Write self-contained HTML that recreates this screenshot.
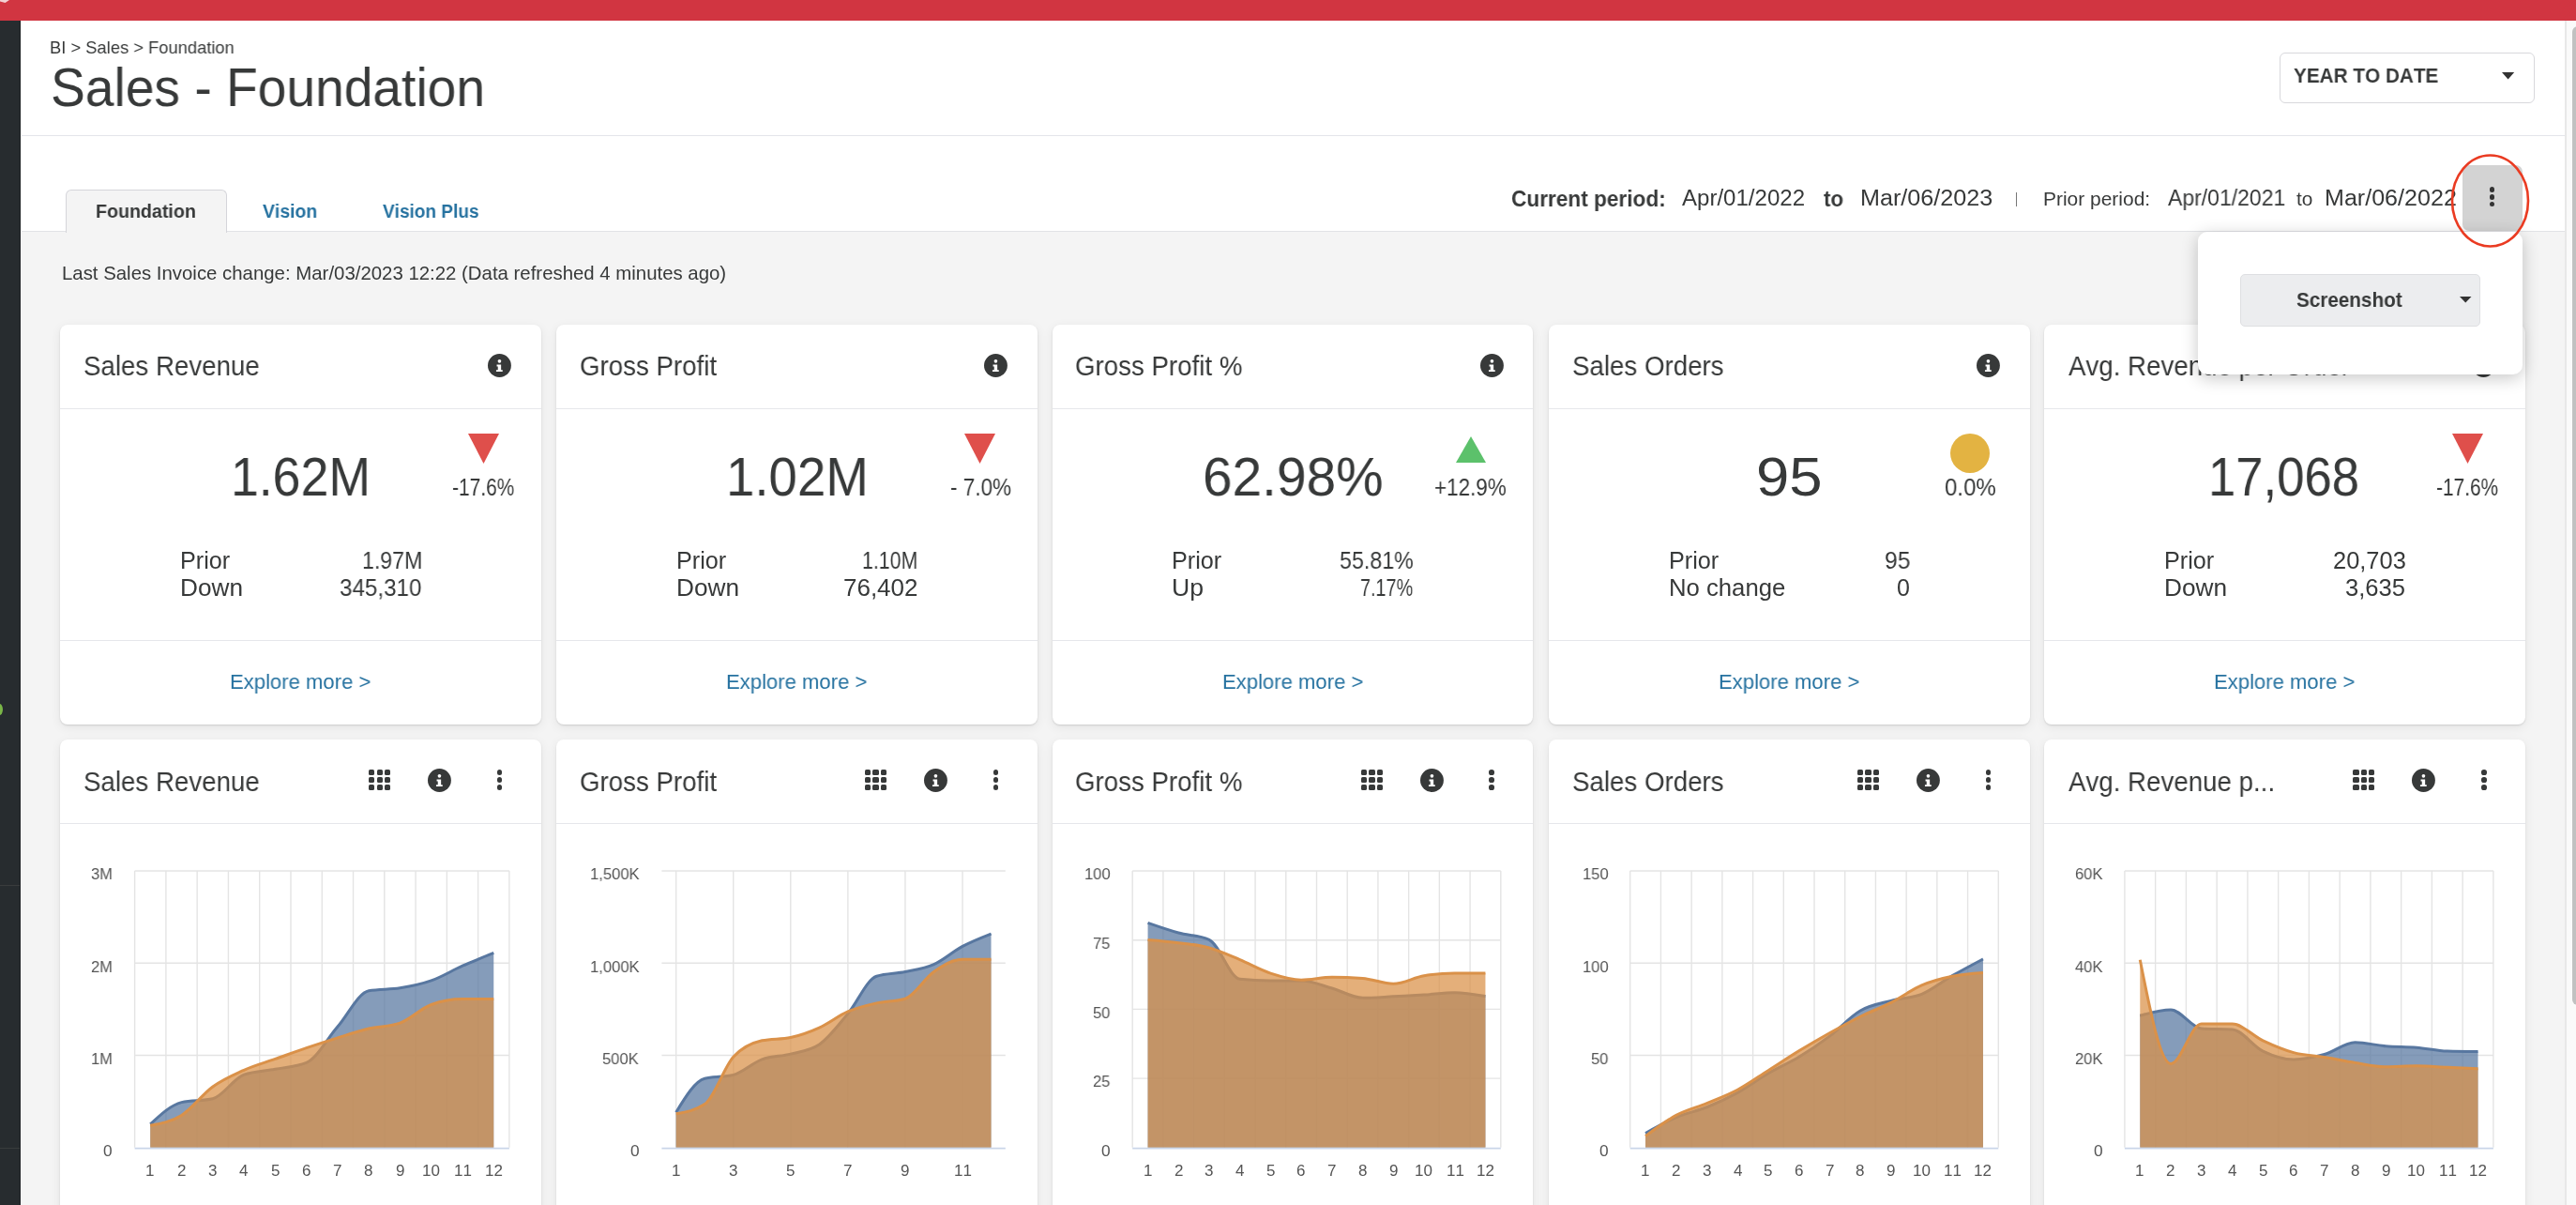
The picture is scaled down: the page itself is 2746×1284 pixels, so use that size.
<!DOCTYPE html><html><head><meta charset="utf-8"><style>
html,body{margin:0;padding:0;width:2746px;height:1284px;overflow:hidden;background:#f4f4f4}
#root{position:relative;width:2746px;height:1284px;overflow:hidden;font-family:"Liberation Sans",sans-serif;}
#root div{position:absolute;white-space:nowrap;line-height:1;box-sizing:border-box;font-kerning:none;font-feature-settings:"kern" 0,"liga" 0}
#root svg{position:absolute;overflow:visible}
#root .t{will-change:transform}
</style></head><body><div id="root">
<div style="left:0px;top:0px;width:2746px;height:1284px;background:#f4f4f4"></div>
<div style="left:22px;top:22px;width:2712px;height:125px;background:#fff"></div>
<div style="left:22px;top:144px;width:2712px;height:1px;background:#e4e5ea"></div>
<div style="left:22px;top:145px;width:2712px;height:102px;background:#fff"></div>
<div style="left:22px;top:246px;width:2712px;height:1px;background:#e1e2e6"></div>
<div style="left:0px;top:0px;width:2746px;height:22px;background:#d13541"></div>
<svg style="left:0;top:0" width="12" height="5"><path d="M0 0 H10 L5.5 3 L0 1.6 Z" fill="#f3d0d3"/></svg>
<div style="left:0px;top:22px;width:22px;height:1262px;background:#272c2f"></div>
<div style="left:22px;top:22px;width:1px;height:1262px;background:#fff"></div>
<div style="left:21px;top:22px;width:1px;height:1262px;background:#1d2123"></div>
<div style="left:0px;top:943px;width:21px;height:1px;background:#393c3d"></div>
<div style="left:0px;top:1223px;width:21px;height:1px;background:#393c3d"></div>
<div style="left:-4px;top:750px;width:7px;height:12px;border-radius:50%;background:#7ab648"></div>
<div class="t" style="left:53.00px;top:41.60px;font-size:18.4px;font-weight:normal;color:#373939;letter-spacing:0.000px;transform:scaleX(0.9974);transform-origin:0 0;">BI &gt; Sales &gt; Foundation</div>
<div class="t" style="left:54.08px;top:65.16px;font-size:57px;font-weight:normal;color:#373939;letter-spacing:0.000px;transform:scaleX(0.9677);transform-origin:0 0;">Sales - Foundation</div>
<div style="left:2430px;top:56px;width:272px;height:54px;border:1px solid #d8d8dc;border-radius:6px;background:#fff"></div>
<div class="t" style="left:2445.23px;top:70.24px;font-size:22px;font-weight:bold;color:#373939;letter-spacing:0.000px;transform:scaleX(0.9423);transform-origin:0 0;">YEAR TO DATE</div>
<svg style="left:2667.3px;top:77.2px" width="13.2" height="7.4"><path d="M0 0 L13.2 0 L6.6 7.4 Z" fill="#333"/></svg>
<div style="left:70px;top:202px;width:172px;height:46px;background:#f4f4f4;border:1px solid #d5d5da;border-bottom:none;border-radius:6px 6px 0 0"></div>
<div class="t" style="left:102.37px;top:215.04px;font-size:20px;font-weight:bold;color:#373939;letter-spacing:0.000px;transform:scaleX(0.9812);transform-origin:0 0;">Foundation</div>
<div class="t" style="left:280.36px;top:214.74px;font-size:20px;font-weight:bold;color:#2672a0;letter-spacing:0.000px;transform:scaleX(0.9700);transform-origin:0 0;">Vision</div>
<div class="t" style="left:408.16px;top:214.74px;font-size:20px;font-weight:bold;color:#2672a0;letter-spacing:0.000px;transform:scaleX(0.9506);transform-origin:0 0;">Vision Plus</div>
<div class="t" style="left:1611.21px;top:199.59px;font-size:24.3px;font-weight:bold;color:#373939;letter-spacing:0.000px;transform:scaleX(0.9316);transform-origin:0 0;">Current period:</div>
<div class="t" style="left:1793.30px;top:200.27px;font-size:23.5px;font-weight:normal;color:#373939;letter-spacing:0.000px;transform:scaleX(1.0236);transform-origin:0 0;">Apr/01/2022</div>
<div class="t" style="left:1943.77px;top:199.85px;font-size:24px;font-weight:bold;color:#373939;letter-spacing:0.000px;transform:scaleX(0.9302);transform-origin:0 0;">to</div>
<div class="t" style="left:1982.66px;top:200.27px;font-size:23.5px;font-weight:normal;color:#373939;letter-spacing:0.000px;transform:scaleX(1.0713);transform-origin:0 0;">Mar/06/2023</div>
<div style="left:2149px;top:205px;width:1.4px;height:14.5px;background:#777"></div>
<div class="t" style="left:2178.10px;top:203.38px;font-size:19.6px;font-weight:normal;color:#373939;letter-spacing:0.000px;transform:scaleX(1.0692);transform-origin:0 0;">Prior period:</div>
<div class="t" style="left:2310.80px;top:200.07px;font-size:23.5px;font-weight:normal;color:#373939;letter-spacing:0.000px;transform:scaleX(0.9780);transform-origin:0 0;">Apr/01/2021</div>
<div class="t" style="left:2448.34px;top:203.38px;font-size:19.6px;font-weight:normal;color:#373939;letter-spacing:0.000px;transform:scaleX(1.0623);transform-origin:0 0;">to</div>
<div class="t" style="left:2477.57px;top:200.07px;font-size:23.5px;font-weight:normal;color:#373939;letter-spacing:0.000px;transform:scaleX(1.0674);transform-origin:0 0;">Mar/06/2022</div>
<div style="left:2625px;top:176px;width:64px;height:70px;background:#d3d3d3;border-radius:7px"></div>
<div style="left:2654.10px;top:199.40px;width:5.2px;height:5.2px;border-radius:50%;background:#333"></div>
<div style="left:2654.10px;top:207.40px;width:5.2px;height:5.2px;border-radius:50%;background:#333"></div>
<div style="left:2654.10px;top:215.00px;width:5.2px;height:5.2px;border-radius:50%;background:#333"></div>
<div class="t" style="left:65.59px;top:280.69px;font-size:20.3px;font-weight:normal;color:#373939;letter-spacing:0.000px;transform:scaleX(1.0050);transform-origin:0 0;">Last Sales Invoice change: Mar/03/2023 12:22 (Data refreshed 4 minutes ago)</div>
<div style="left:64.1px;top:346px;width:512.7px;height:426px;background:#fff;border-radius:8px;box-shadow:0 1px 2px rgba(0,0,0,0.12),0 3px 12px rgba(0,0,0,0.07)"></div>
<div style="left:64.1px;top:435px;width:512.7px;height:1px;background:#e6e7eb"></div>
<div style="left:64.1px;top:682px;width:512.7px;height:1px;background:#e6e7eb"></div>
<div class="t" style="left:88.72px;top:375.36px;font-size:30px;font-weight:normal;color:#373939;letter-spacing:0.000px;transform:scaleX(0.9227);transform-origin:0 0;">Sales Revenue</div>
<svg style="left:519.25px;top:375.85px" width="26.90" height="26.90" viewBox="-13.45 -13.45 26.90 26.90"><circle cx="0" cy="0" r="12.45" fill="#373939"/><circle cx="0" cy="-4.6" r="1.85" fill="#fff"/><path d="M-2.9 -0.9 H1.7 V4.9 H3.3 V6.5 H-3.5 V4.9 H-1.7 V1.1 H-2.9 Z" fill="#fff"/></svg>
<div class="t" style="left:246.24px;top:479.32px;font-size:58px;font-weight:normal;color:#373939;letter-spacing:0.000px;transform:scaleX(0.9237);transform-origin:0 0;">1.62M</div>
<svg style="left:499.1px;top:462px" width="33" height="32"><path d="M0 0 H33 L16.5 32 Z" fill="#df4f4b"/></svg>
<div class="t" style="left:482.09px;top:507.46px;font-size:25.4px;font-weight:normal;color:#373939;letter-spacing:0.000px;transform:scaleX(0.8254);transform-origin:0 0;">-17.6%</div>
<div class="t" style="left:191.78px;top:584.70px;font-size:25px;font-weight:normal;color:#373939;letter-spacing:0.000px;transform:scaleX(1.0079);transform-origin:0 0;">Prior</div>
<div class="t" style="left:385.65px;top:584.70px;font-size:25px;font-weight:normal;color:#373939;letter-spacing:0.000px;transform:scaleX(0.9252);transform-origin:0 0;">1.97M</div>
<div class="t" style="left:191.70px;top:613.80px;font-size:25px;font-weight:normal;color:#373939;letter-spacing:0.000px;transform:scaleX(1.0490);transform-origin:0 0;">Down</div>
<div class="t" style="left:361.53px;top:613.80px;font-size:25px;font-weight:normal;color:#373939;letter-spacing:0.000px;transform:scaleX(0.9672);transform-origin:0 0;">345,310</div>
<div class="t" style="left:245.27px;top:715.99px;font-size:22.3px;font-weight:normal;color:#2672a0;letter-spacing:0.000px;transform:scaleX(0.9903);transform-origin:0 0;">Explore more &gt;</div>
<div style="left:593.0px;top:346px;width:512.7px;height:426px;background:#fff;border-radius:8px;box-shadow:0 1px 2px rgba(0,0,0,0.12),0 3px 12px rgba(0,0,0,0.07)"></div>
<div style="left:593.0px;top:435px;width:512.7px;height:1px;background:#e6e7eb"></div>
<div style="left:593.0px;top:682px;width:512.7px;height:1px;background:#e6e7eb"></div>
<div class="t" style="left:617.62px;top:375.36px;font-size:30px;font-weight:normal;color:#373939;letter-spacing:0.000px;transform:scaleX(0.9227);transform-origin:0 0;">Gross Profit</div>
<svg style="left:1048.15px;top:375.85px" width="26.90" height="26.90" viewBox="-13.45 -13.45 26.90 26.90"><circle cx="0" cy="0" r="12.45" fill="#373939"/><circle cx="0" cy="-4.6" r="1.85" fill="#fff"/><path d="M-2.9 -0.9 H1.7 V4.9 H3.3 V6.5 H-3.5 V4.9 H-1.7 V1.1 H-2.9 Z" fill="#fff"/></svg>
<div class="t" style="left:773.77px;top:479.32px;font-size:58px;font-weight:normal;color:#373939;letter-spacing:0.000px;transform:scaleX(0.9408);transform-origin:0 0;">1.02M</div>
<svg style="left:1028.0px;top:462px" width="33" height="32"><path d="M0 0 H33 L16.5 32 Z" fill="#df4f4b"/></svg>
<div class="t" style="left:1012.72px;top:507.46px;font-size:25.4px;font-weight:normal;color:#373939;letter-spacing:0.000px;transform:scaleX(0.8864);transform-origin:0 0;">- 7.0%</div>
<div class="t" style="left:720.68px;top:584.70px;font-size:25px;font-weight:normal;color:#373939;letter-spacing:0.000px;transform:scaleX(1.0079);transform-origin:0 0;">Prior</div>
<div class="t" style="left:919.39px;top:584.70px;font-size:25px;font-weight:normal;color:#373939;letter-spacing:0.000px;transform:scaleX(0.8534);transform-origin:0 0;">1.10M</div>
<div class="t" style="left:720.60px;top:613.80px;font-size:25px;font-weight:normal;color:#373939;letter-spacing:0.000px;transform:scaleX(1.0490);transform-origin:0 0;">Down</div>
<div class="t" style="left:898.80px;top:613.80px;font-size:25px;font-weight:normal;color:#373939;letter-spacing:0.000px;transform:scaleX(1.0392);transform-origin:0 0;">76,402</div>
<div class="t" style="left:774.17px;top:715.99px;font-size:22.3px;font-weight:normal;color:#2672a0;letter-spacing:0.000px;transform:scaleX(0.9903);transform-origin:0 0;">Explore more &gt;</div>
<div style="left:1121.8px;top:346px;width:512.7px;height:426px;background:#fff;border-radius:8px;box-shadow:0 1px 2px rgba(0,0,0,0.12),0 3px 12px rgba(0,0,0,0.07)"></div>
<div style="left:1121.8px;top:435px;width:512.7px;height:1px;background:#e6e7eb"></div>
<div style="left:1121.8px;top:682px;width:512.7px;height:1px;background:#e6e7eb"></div>
<div class="t" style="left:1146.42px;top:375.36px;font-size:30px;font-weight:normal;color:#373939;letter-spacing:0.000px;transform:scaleX(0.9227);transform-origin:0 0;">Gross Profit %</div>
<svg style="left:1576.95px;top:375.85px" width="26.90" height="26.90" viewBox="-13.45 -13.45 26.90 26.90"><circle cx="0" cy="0" r="12.45" fill="#373939"/><circle cx="0" cy="-4.6" r="1.85" fill="#fff"/><path d="M-2.9 -0.9 H1.7 V4.9 H3.3 V6.5 H-3.5 V4.9 H-1.7 V1.1 H-2.9 Z" fill="#fff"/></svg>
<div class="t" style="left:1281.56px;top:479.32px;font-size:58px;font-weight:normal;color:#373939;letter-spacing:0.000px;transform:scaleX(0.9784);transform-origin:0 0;">62.98%</div>
<svg style="left:1551.8px;top:465px" width="32" height="28"><path d="M16 0 L32 28 H0 Z" fill="#5cc16b"/></svg>
<div class="t" style="left:1528.71px;top:507.46px;font-size:25.4px;font-weight:normal;color:#373939;letter-spacing:0.000px;transform:scaleX(0.8847);transform-origin:0 0;">+12.9%</div>
<div class="t" style="left:1249.48px;top:584.70px;font-size:25px;font-weight:normal;color:#373939;letter-spacing:0.000px;transform:scaleX(1.0079);transform-origin:0 0;">Prior</div>
<div class="t" style="left:1427.97px;top:584.70px;font-size:25px;font-weight:normal;color:#373939;letter-spacing:0.000px;transform:scaleX(0.9293);transform-origin:0 0;">55.81%</div>
<div class="t" style="left:1249.37px;top:613.80px;font-size:25px;font-weight:normal;color:#373939;letter-spacing:0.000px;transform:scaleX(1.0643);transform-origin:0 0;">Up</div>
<div class="t" style="left:1450.41px;top:613.80px;font-size:25px;font-weight:normal;color:#373939;letter-spacing:0.000px;transform:scaleX(0.7913);transform-origin:0 0;">7.17%</div>
<div class="t" style="left:1302.97px;top:715.99px;font-size:22.3px;font-weight:normal;color:#2672a0;letter-spacing:0.000px;transform:scaleX(0.9903);transform-origin:0 0;">Explore more &gt;</div>
<div style="left:1650.9px;top:346px;width:512.7px;height:426px;background:#fff;border-radius:8px;box-shadow:0 1px 2px rgba(0,0,0,0.12),0 3px 12px rgba(0,0,0,0.07)"></div>
<div style="left:1650.9px;top:435px;width:512.7px;height:1px;background:#e6e7eb"></div>
<div style="left:1650.9px;top:682px;width:512.7px;height:1px;background:#e6e7eb"></div>
<div class="t" style="left:1675.52px;top:375.36px;font-size:30px;font-weight:normal;color:#373939;letter-spacing:0.000px;transform:scaleX(0.9227);transform-origin:0 0;">Sales Orders</div>
<svg style="left:2106.05px;top:375.85px" width="26.90" height="26.90" viewBox="-13.45 -13.45 26.90 26.90"><circle cx="0" cy="0" r="12.45" fill="#373939"/><circle cx="0" cy="-4.6" r="1.85" fill="#fff"/><path d="M-2.9 -0.9 H1.7 V4.9 H3.3 V6.5 H-3.5 V4.9 H-1.7 V1.1 H-2.9 Z" fill="#fff"/></svg>
<div class="t" style="left:1871.99px;top:479.32px;font-size:58px;font-weight:normal;color:#373939;letter-spacing:0.000px;transform:scaleX(1.0937);transform-origin:0 0;">95</div>
<div style="left:2078.50px;top:461.50px;width:42.4px;height:42.4px;border-radius:50%;background:#e3b342"></div>
<div class="t" style="left:2072.56px;top:507.46px;font-size:25.4px;font-weight:normal;color:#373939;letter-spacing:0.000px;transform:scaleX(0.9464);transform-origin:0 0;">0.0%</div>
<div class="t" style="left:1778.58px;top:584.70px;font-size:25px;font-weight:normal;color:#373939;letter-spacing:0.000px;transform:scaleX(1.0079);transform-origin:0 0;">Prior</div>
<div class="t" style="left:2009.05px;top:584.70px;font-size:25px;font-weight:normal;color:#373939;letter-spacing:0.000px;transform:scaleX(0.9850);transform-origin:0 0;">95</div>
<div class="t" style="left:1778.54px;top:613.80px;font-size:25px;font-weight:normal;color:#373939;letter-spacing:0.000px;transform:scaleX(1.0276);transform-origin:0 0;">No change</div>
<div class="t" style="left:2022.40px;top:613.80px;font-size:25px;font-weight:normal;color:#373939;letter-spacing:0.000px;">0</div>
<div class="t" style="left:1832.07px;top:715.99px;font-size:22.3px;font-weight:normal;color:#2672a0;letter-spacing:0.000px;transform:scaleX(0.9903);transform-origin:0 0;">Explore more &gt;</div>
<div style="left:2179.3px;top:346px;width:512.7px;height:426px;background:#fff;border-radius:8px;box-shadow:0 1px 2px rgba(0,0,0,0.12),0 3px 12px rgba(0,0,0,0.07)"></div>
<div style="left:2179.3px;top:435px;width:512.7px;height:1px;background:#e6e7eb"></div>
<div style="left:2179.3px;top:682px;width:512.7px;height:1px;background:#e6e7eb"></div>
<div class="t" style="left:2205.30px;top:375.36px;font-size:30px;font-weight:normal;color:#373939;letter-spacing:0.000px;transform:scaleX(0.9227);transform-origin:0 0;">Avg. Revenue per Order</div>
<svg style="left:2634.45px;top:375.85px" width="26.90" height="26.90" viewBox="-13.45 -13.45 26.90 26.90"><circle cx="0" cy="0" r="12.45" fill="#373939"/><circle cx="0" cy="-4.6" r="1.85" fill="#fff"/><path d="M-2.9 -0.9 H1.7 V4.9 H3.3 V6.5 H-3.5 V4.9 H-1.7 V1.1 H-2.9 Z" fill="#fff"/></svg>
<div class="t" style="left:2354.42px;top:479.32px;font-size:58px;font-weight:normal;color:#373939;letter-spacing:0.000px;transform:scaleX(0.9067);transform-origin:0 0;">17,068</div>
<svg style="left:2614.3px;top:462px" width="33" height="32"><path d="M0 0 H33 L16.5 32 Z" fill="#df4f4b"/></svg>
<div class="t" style="left:2597.29px;top:507.46px;font-size:25.4px;font-weight:normal;color:#373939;letter-spacing:0.000px;transform:scaleX(0.8229);transform-origin:0 0;">-17.6%</div>
<div class="t" style="left:2306.98px;top:584.70px;font-size:25px;font-weight:normal;color:#373939;letter-spacing:0.000px;transform:scaleX(1.0079);transform-origin:0 0;">Prior</div>
<div class="t" style="left:2486.73px;top:584.70px;font-size:25px;font-weight:normal;color:#373939;letter-spacing:0.000px;transform:scaleX(1.0176);transform-origin:0 0;">20,703</div>
<div class="t" style="left:2306.90px;top:613.80px;font-size:25px;font-weight:normal;color:#373939;letter-spacing:0.000px;transform:scaleX(1.0490);transform-origin:0 0;">Down</div>
<div class="t" style="left:2500.38px;top:613.80px;font-size:25px;font-weight:normal;color:#373939;letter-spacing:0.000px;transform:scaleX(1.0231);transform-origin:0 0;">3,635</div>
<div class="t" style="left:2360.47px;top:715.99px;font-size:22.3px;font-weight:normal;color:#2672a0;letter-spacing:0.000px;transform:scaleX(0.9903);transform-origin:0 0;">Explore more &gt;</div>
<div style="left:64.1px;top:788px;width:512.7px;height:520px;background:#fff;border-radius:8px;box-shadow:0 1px 2px rgba(0,0,0,0.12),0 3px 12px rgba(0,0,0,0.07)"></div>
<div style="left:64.1px;top:877px;width:512.7px;height:1px;background:#e6e7eb"></div>
<div class="t" style="left:88.72px;top:817.56px;font-size:30px;font-weight:normal;color:#373939;letter-spacing:0.000px;transform:scaleX(0.9227);transform-origin:0 0;">Sales Revenue</div>
<div style="left:393.20px;top:819.90px;width:6.3px;height:6.3px;border-radius:1.6px;background:#373939"></div>
<div style="left:393.20px;top:827.75px;width:6.3px;height:6.3px;border-radius:1.6px;background:#373939"></div>
<div style="left:393.20px;top:835.60px;width:6.3px;height:6.3px;border-radius:1.6px;background:#373939"></div>
<div style="left:401.55px;top:819.90px;width:6.3px;height:6.3px;border-radius:1.6px;background:#373939"></div>
<div style="left:401.55px;top:827.75px;width:6.3px;height:6.3px;border-radius:1.6px;background:#373939"></div>
<div style="left:401.55px;top:835.60px;width:6.3px;height:6.3px;border-radius:1.6px;background:#373939"></div>
<div style="left:409.90px;top:819.90px;width:6.3px;height:6.3px;border-radius:1.6px;background:#373939"></div>
<div style="left:409.90px;top:827.75px;width:6.3px;height:6.3px;border-radius:1.6px;background:#373939"></div>
<div style="left:409.90px;top:835.60px;width:6.3px;height:6.3px;border-radius:1.6px;background:#373939"></div>
<svg style="left:455.15px;top:817.55px" width="26.90" height="26.90" viewBox="-13.45 -13.45 26.90 26.90"><circle cx="0" cy="0" r="12.45" fill="#373939"/><circle cx="0" cy="-4.6" r="1.85" fill="#fff"/><path d="M-2.9 -0.9 H1.7 V4.9 H3.3 V6.5 H-3.5 V4.9 H-1.7 V1.1 H-2.9 Z" fill="#fff"/></svg>
<div style="left:529.75px;top:820.15px;width:5.7px;height:5.7px;border-radius:50%;background:#373939"></div>
<div style="left:529.75px;top:828.25px;width:5.7px;height:5.7px;border-radius:50%;background:#373939"></div>
<div style="left:529.75px;top:836.05px;width:5.7px;height:5.7px;border-radius:50%;background:#373939"></div>
<svg style="left:0;top:0" width="2746" height="1284"><line x1="143.60" y1="1124.53" x2="542.90" y2="1124.53" stroke="#e4e4e4" stroke-width="1.4"/><line x1="143.60" y1="1026.27" x2="542.90" y2="1026.27" stroke="#e4e4e4" stroke-width="1.4"/><line x1="143.60" y1="928.00" x2="542.90" y2="928.00" stroke="#e4e4e4" stroke-width="1.4"/><line x1="143.60" y1="928.00" x2="143.60" y2="1222.80" stroke="#e4e4e4" stroke-width="1.4"/><line x1="176.88" y1="928.00" x2="176.88" y2="1222.80" stroke="#e4e4e4" stroke-width="1.4"/><line x1="210.15" y1="928.00" x2="210.15" y2="1222.80" stroke="#e4e4e4" stroke-width="1.4"/><line x1="243.42" y1="928.00" x2="243.42" y2="1222.80" stroke="#e4e4e4" stroke-width="1.4"/><line x1="276.70" y1="928.00" x2="276.70" y2="1222.80" stroke="#e4e4e4" stroke-width="1.4"/><line x1="309.98" y1="928.00" x2="309.98" y2="1222.80" stroke="#e4e4e4" stroke-width="1.4"/><line x1="343.25" y1="928.00" x2="343.25" y2="1222.80" stroke="#e4e4e4" stroke-width="1.4"/><line x1="376.52" y1="928.00" x2="376.52" y2="1222.80" stroke="#e4e4e4" stroke-width="1.4"/><line x1="409.80" y1="928.00" x2="409.80" y2="1222.80" stroke="#e4e4e4" stroke-width="1.4"/><line x1="443.07" y1="928.00" x2="443.07" y2="1222.80" stroke="#e4e4e4" stroke-width="1.4"/><line x1="476.35" y1="928.00" x2="476.35" y2="1222.80" stroke="#e4e4e4" stroke-width="1.4"/><line x1="509.62" y1="928.00" x2="509.62" y2="1222.80" stroke="#e4e4e4" stroke-width="1.4"/><line x1="542.90" y1="928.00" x2="542.90" y2="1222.80" stroke="#e4e4e4" stroke-width="1.4"/><path d="M160.24 1197.94 C171.33 1187.60 182.42 1177.27 193.51 1174.65 C204.60 1172.03 215.70 1173.34 226.79 1170.72 C237.88 1168.10 248.97 1149.10 260.06 1145.17 C271.15 1141.24 282.25 1141.40 293.34 1139.27 C304.43 1137.14 315.52 1136.98 326.61 1132.39 C337.70 1127.81 348.80 1106.85 359.89 1094.07 C370.98 1081.30 382.07 1057.71 393.16 1055.75 C404.25 1053.78 415.35 1054.60 426.44 1052.80 C437.53 1051.00 448.62 1048.87 459.71 1044.94 C470.80 1041.01 481.90 1034.13 492.99 1029.21 C504.08 1024.30 515.17 1019.88 526.26 1015.46 L526.26 1222.80 L160.24 1222.80 Z" fill="#5877a0" fill-opacity="0.73"/><path d="M160.24 1197.94 C171.33 1187.60 182.42 1177.27 193.51 1174.65 C204.60 1172.03 215.70 1173.34 226.79 1170.72 C237.88 1168.10 248.97 1149.10 260.06 1145.17 C271.15 1141.24 282.25 1141.40 293.34 1139.27 C304.43 1137.14 315.52 1136.98 326.61 1132.39 C337.70 1127.81 348.80 1106.85 359.89 1094.07 C370.98 1081.30 382.07 1057.71 393.16 1055.75 C404.25 1053.78 415.35 1054.60 426.44 1052.80 C437.53 1051.00 448.62 1048.87 459.71 1044.94 C470.80 1041.01 481.90 1034.13 492.99 1029.21 C504.08 1024.30 515.17 1019.88 526.26 1015.46" fill="none" stroke="#5877a0" stroke-width="3" stroke-linejoin="round"/><path d="M160.24 1199.22 C171.33 1197.25 182.42 1195.29 193.51 1188.41 C204.60 1181.53 215.70 1165.97 226.79 1157.94 C237.88 1149.92 248.97 1145.17 260.06 1140.26 C271.15 1135.34 282.25 1132.39 293.34 1128.46 C304.43 1124.53 315.52 1120.44 326.61 1116.67 C337.70 1112.91 348.80 1109.30 359.89 1105.86 C370.98 1102.42 382.07 1098.66 393.16 1096.04 C404.25 1093.42 415.35 1094.07 426.44 1090.14 C437.53 1086.21 448.62 1074.42 459.71 1070.49 C470.80 1066.56 481.90 1064.59 492.99 1064.59 C504.08 1064.59 515.17 1064.59 526.26 1064.59 L526.26 1222.80 L160.24 1222.80 Z" fill="#da9149" fill-opacity="0.73"/><path d="M160.24 1199.22 C171.33 1197.25 182.42 1195.29 193.51 1188.41 C204.60 1181.53 215.70 1165.97 226.79 1157.94 C237.88 1149.92 248.97 1145.17 260.06 1140.26 C271.15 1135.34 282.25 1132.39 293.34 1128.46 C304.43 1124.53 315.52 1120.44 326.61 1116.67 C337.70 1112.91 348.80 1109.30 359.89 1105.86 C370.98 1102.42 382.07 1098.66 393.16 1096.04 C404.25 1093.42 415.35 1094.07 426.44 1090.14 C437.53 1086.21 448.62 1074.42 459.71 1070.49 C470.80 1066.56 481.90 1064.59 492.99 1064.59 C504.08 1064.59 515.17 1064.59 526.26 1064.59" fill="none" stroke="#da9149" stroke-width="3" stroke-linejoin="round"/><line x1="143.60" y1="1223.60" x2="542.90" y2="1223.60" stroke="#c9d5e9" stroke-width="1.6"/></svg>
<div class="t" style="left:110.15px;top:1218.03px;font-size:17.3px;font-weight:normal;color:#555;letter-spacing:0.000px;">0</div>
<div class="t" style="left:97.31px;top:1119.76px;font-size:17.3px;font-weight:normal;color:#555;letter-spacing:0.000px;transform:scaleX(0.9600);transform-origin:0 0;">1M</div>
<div class="t" style="left:97.31px;top:1021.50px;font-size:17.3px;font-weight:normal;color:#555;letter-spacing:0.000px;transform:scaleX(0.9600);transform-origin:0 0;">2M</div>
<div class="t" style="left:97.31px;top:923.23px;font-size:17.3px;font-weight:normal;color:#555;letter-spacing:0.000px;transform:scaleX(0.9600);transform-origin:0 0;">3M</div>
<div class="t" style="left:155.24px;top:1239.48px;font-size:17px;font-weight:normal;color:#555;letter-spacing:0.000px;">1</div>
<div class="t" style="left:188.89px;top:1239.48px;font-size:17px;font-weight:normal;color:#555;letter-spacing:0.000px;">2</div>
<div class="t" style="left:222.04px;top:1239.48px;font-size:17px;font-weight:normal;color:#555;letter-spacing:0.000px;">3</div>
<div class="t" style="left:255.44px;top:1239.48px;font-size:17px;font-weight:normal;color:#555;letter-spacing:0.000px;">4</div>
<div class="t" style="left:288.59px;top:1239.48px;font-size:17px;font-weight:normal;color:#555;letter-spacing:0.000px;">5</div>
<div class="t" style="left:321.86px;top:1239.48px;font-size:17px;font-weight:normal;color:#555;letter-spacing:0.000px;">6</div>
<div class="t" style="left:355.26px;top:1239.48px;font-size:17px;font-weight:normal;color:#555;letter-spacing:0.000px;">7</div>
<div class="t" style="left:388.41px;top:1239.48px;font-size:17px;font-weight:normal;color:#555;letter-spacing:0.000px;">8</div>
<div class="t" style="left:421.69px;top:1239.48px;font-size:17px;font-weight:normal;color:#555;letter-spacing:0.000px;">9</div>
<div class="t" style="left:449.96px;top:1239.48px;font-size:17px;font-weight:normal;color:#555;letter-spacing:0.000px;">10</div>
<div class="t" style="left:483.86px;top:1239.48px;font-size:17px;font-weight:normal;color:#555;letter-spacing:0.000px;">11</div>
<div class="t" style="left:516.64px;top:1239.48px;font-size:17px;font-weight:normal;color:#555;letter-spacing:0.000px;">12</div>
<div style="left:593.0px;top:788px;width:512.7px;height:520px;background:#fff;border-radius:8px;box-shadow:0 1px 2px rgba(0,0,0,0.12),0 3px 12px rgba(0,0,0,0.07)"></div>
<div style="left:593.0px;top:877px;width:512.7px;height:1px;background:#e6e7eb"></div>
<div class="t" style="left:617.62px;top:817.56px;font-size:30px;font-weight:normal;color:#373939;letter-spacing:0.000px;transform:scaleX(0.9227);transform-origin:0 0;">Gross Profit</div>
<div style="left:922.10px;top:819.90px;width:6.3px;height:6.3px;border-radius:1.6px;background:#373939"></div>
<div style="left:922.10px;top:827.75px;width:6.3px;height:6.3px;border-radius:1.6px;background:#373939"></div>
<div style="left:922.10px;top:835.60px;width:6.3px;height:6.3px;border-radius:1.6px;background:#373939"></div>
<div style="left:930.45px;top:819.90px;width:6.3px;height:6.3px;border-radius:1.6px;background:#373939"></div>
<div style="left:930.45px;top:827.75px;width:6.3px;height:6.3px;border-radius:1.6px;background:#373939"></div>
<div style="left:930.45px;top:835.60px;width:6.3px;height:6.3px;border-radius:1.6px;background:#373939"></div>
<div style="left:938.80px;top:819.90px;width:6.3px;height:6.3px;border-radius:1.6px;background:#373939"></div>
<div style="left:938.80px;top:827.75px;width:6.3px;height:6.3px;border-radius:1.6px;background:#373939"></div>
<div style="left:938.80px;top:835.60px;width:6.3px;height:6.3px;border-radius:1.6px;background:#373939"></div>
<svg style="left:984.05px;top:817.55px" width="26.90" height="26.90" viewBox="-13.45 -13.45 26.90 26.90"><circle cx="0" cy="0" r="12.45" fill="#373939"/><circle cx="0" cy="-4.6" r="1.85" fill="#fff"/><path d="M-2.9 -0.9 H1.7 V4.9 H3.3 V6.5 H-3.5 V4.9 H-1.7 V1.1 H-2.9 Z" fill="#fff"/></svg>
<div style="left:1058.65px;top:820.15px;width:5.7px;height:5.7px;border-radius:50%;background:#373939"></div>
<div style="left:1058.65px;top:828.25px;width:5.7px;height:5.7px;border-radius:50%;background:#373939"></div>
<div style="left:1058.65px;top:836.05px;width:5.7px;height:5.7px;border-radius:50%;background:#373939"></div>
<svg style="left:0;top:0" width="2746" height="1284"><line x1="705.40" y1="1124.53" x2="1071.80" y2="1124.53" stroke="#e4e4e4" stroke-width="1.4"/><line x1="705.40" y1="1026.27" x2="1071.80" y2="1026.27" stroke="#e4e4e4" stroke-width="1.4"/><line x1="705.40" y1="928.00" x2="1071.80" y2="928.00" stroke="#e4e4e4" stroke-width="1.4"/><line x1="720.67" y1="928.00" x2="720.67" y2="1222.80" stroke="#e4e4e4" stroke-width="1.4"/><line x1="781.73" y1="928.00" x2="781.73" y2="1222.80" stroke="#e4e4e4" stroke-width="1.4"/><line x1="842.80" y1="928.00" x2="842.80" y2="1222.80" stroke="#e4e4e4" stroke-width="1.4"/><line x1="903.87" y1="928.00" x2="903.87" y2="1222.80" stroke="#e4e4e4" stroke-width="1.4"/><line x1="964.93" y1="928.00" x2="964.93" y2="1222.80" stroke="#e4e4e4" stroke-width="1.4"/><line x1="1026.00" y1="928.00" x2="1026.00" y2="1222.80" stroke="#e4e4e4" stroke-width="1.4"/><path d="M720.67 1185.26 C730.84 1168.59 741.02 1151.92 751.20 1149.30 C761.38 1146.68 771.56 1147.99 781.73 1145.37 C791.91 1142.75 802.09 1132.56 812.27 1128.86 C822.44 1125.16 832.62 1125.81 842.80 1123.16 C852.98 1120.50 863.16 1119.75 873.33 1112.94 C883.51 1106.12 893.69 1092.24 903.87 1080.12 C914.04 1068.00 924.22 1043.37 934.40 1040.22 C944.58 1037.08 954.76 1037.60 964.93 1035.50 C975.11 1033.41 985.29 1032.16 995.47 1027.64 C1005.64 1023.12 1015.82 1013.82 1026.00 1008.38 C1036.18 1002.94 1046.36 998.98 1056.53 995.02 L1056.53 1222.80 L720.67 1222.80 Z" fill="#5877a0" fill-opacity="0.73"/><path d="M720.67 1185.26 C730.84 1168.59 741.02 1151.92 751.20 1149.30 C761.38 1146.68 771.56 1147.99 781.73 1145.37 C791.91 1142.75 802.09 1132.56 812.27 1128.86 C822.44 1125.16 832.62 1125.81 842.80 1123.16 C852.98 1120.50 863.16 1119.75 873.33 1112.94 C883.51 1106.12 893.69 1092.24 903.87 1080.12 C914.04 1068.00 924.22 1043.37 934.40 1040.22 C944.58 1037.08 954.76 1037.60 964.93 1035.50 C975.11 1033.41 985.29 1032.16 995.47 1027.64 C1005.64 1023.12 1015.82 1013.82 1026.00 1008.38 C1036.18 1002.94 1046.36 998.98 1056.53 995.02" fill="none" stroke="#5877a0" stroke-width="3" stroke-linejoin="round"/><path d="M720.67 1186.83 C730.84 1185.13 741.02 1183.43 751.20 1176.61 C761.38 1169.80 771.56 1137.60 781.73 1126.30 C791.91 1115.00 802.09 1111.04 812.27 1108.81 C822.44 1106.58 832.62 1107.70 842.80 1105.47 C852.98 1103.24 863.16 1099.64 873.33 1095.05 C883.51 1090.47 893.69 1082.31 903.87 1077.95 C914.04 1073.60 924.22 1071.21 934.40 1068.91 C944.58 1066.62 954.76 1067.34 964.93 1064.20 C975.11 1061.05 985.29 1042.51 995.47 1035.50 C1005.64 1028.49 1015.82 1022.14 1026.00 1022.14 C1036.18 1022.14 1046.36 1022.14 1056.53 1022.14 L1056.53 1222.80 L720.67 1222.80 Z" fill="#da9149" fill-opacity="0.73"/><path d="M720.67 1186.83 C730.84 1185.13 741.02 1183.43 751.20 1176.61 C761.38 1169.80 771.56 1137.60 781.73 1126.30 C791.91 1115.00 802.09 1111.04 812.27 1108.81 C822.44 1106.58 832.62 1107.70 842.80 1105.47 C852.98 1103.24 863.16 1099.64 873.33 1095.05 C883.51 1090.47 893.69 1082.31 903.87 1077.95 C914.04 1073.60 924.22 1071.21 934.40 1068.91 C944.58 1066.62 954.76 1067.34 964.93 1064.20 C975.11 1061.05 985.29 1042.51 995.47 1035.50 C1005.64 1028.49 1015.82 1022.14 1026.00 1022.14 C1036.18 1022.14 1046.36 1022.14 1056.53 1022.14" fill="none" stroke="#da9149" stroke-width="3" stroke-linejoin="round"/><line x1="705.40" y1="1223.60" x2="1071.80" y2="1223.60" stroke="#c9d5e9" stroke-width="1.6"/></svg>
<div class="t" style="left:671.85px;top:1218.03px;font-size:17.3px;font-weight:normal;color:#555;letter-spacing:0.000px;">0</div>
<div class="t" style="left:642.45px;top:1119.76px;font-size:17.3px;font-weight:normal;color:#555;letter-spacing:0.000px;transform:scaleX(0.9600);transform-origin:0 0;">500K</div>
<div class="t" style="left:628.53px;top:1021.50px;font-size:17.3px;font-weight:normal;color:#555;letter-spacing:0.000px;transform:scaleX(0.9600);transform-origin:0 0;">1,000K</div>
<div class="t" style="left:628.53px;top:923.23px;font-size:17.3px;font-weight:normal;color:#555;letter-spacing:0.000px;transform:scaleX(0.9600);transform-origin:0 0;">1,500K</div>
<div class="t" style="left:715.67px;top:1239.48px;font-size:17px;font-weight:normal;color:#555;letter-spacing:0.000px;">1</div>
<div class="t" style="left:776.98px;top:1239.48px;font-size:17px;font-weight:normal;color:#555;letter-spacing:0.000px;">3</div>
<div class="t" style="left:838.05px;top:1239.48px;font-size:17px;font-weight:normal;color:#555;letter-spacing:0.000px;">5</div>
<div class="t" style="left:899.24px;top:1239.48px;font-size:17px;font-weight:normal;color:#555;letter-spacing:0.000px;">7</div>
<div class="t" style="left:960.18px;top:1239.48px;font-size:17px;font-weight:normal;color:#555;letter-spacing:0.000px;">9</div>
<div class="t" style="left:1016.88px;top:1239.48px;font-size:17px;font-weight:normal;color:#555;letter-spacing:0.000px;">11</div>
<div style="left:1121.8px;top:788px;width:512.7px;height:520px;background:#fff;border-radius:8px;box-shadow:0 1px 2px rgba(0,0,0,0.12),0 3px 12px rgba(0,0,0,0.07)"></div>
<div style="left:1121.8px;top:877px;width:512.7px;height:1px;background:#e6e7eb"></div>
<div class="t" style="left:1146.42px;top:817.56px;font-size:30px;font-weight:normal;color:#373939;letter-spacing:0.000px;transform:scaleX(0.9227);transform-origin:0 0;">Gross Profit %</div>
<div style="left:1450.90px;top:819.90px;width:6.3px;height:6.3px;border-radius:1.6px;background:#373939"></div>
<div style="left:1450.90px;top:827.75px;width:6.3px;height:6.3px;border-radius:1.6px;background:#373939"></div>
<div style="left:1450.90px;top:835.60px;width:6.3px;height:6.3px;border-radius:1.6px;background:#373939"></div>
<div style="left:1459.25px;top:819.90px;width:6.3px;height:6.3px;border-radius:1.6px;background:#373939"></div>
<div style="left:1459.25px;top:827.75px;width:6.3px;height:6.3px;border-radius:1.6px;background:#373939"></div>
<div style="left:1459.25px;top:835.60px;width:6.3px;height:6.3px;border-radius:1.6px;background:#373939"></div>
<div style="left:1467.60px;top:819.90px;width:6.3px;height:6.3px;border-radius:1.6px;background:#373939"></div>
<div style="left:1467.60px;top:827.75px;width:6.3px;height:6.3px;border-radius:1.6px;background:#373939"></div>
<div style="left:1467.60px;top:835.60px;width:6.3px;height:6.3px;border-radius:1.6px;background:#373939"></div>
<svg style="left:1512.85px;top:817.55px" width="26.90" height="26.90" viewBox="-13.45 -13.45 26.90 26.90"><circle cx="0" cy="0" r="12.45" fill="#373939"/><circle cx="0" cy="-4.6" r="1.85" fill="#fff"/><path d="M-2.9 -0.9 H1.7 V4.9 H3.3 V6.5 H-3.5 V4.9 H-1.7 V1.1 H-2.9 Z" fill="#fff"/></svg>
<div style="left:1587.45px;top:820.15px;width:5.7px;height:5.7px;border-radius:50%;background:#373939"></div>
<div style="left:1587.45px;top:828.25px;width:5.7px;height:5.7px;border-radius:50%;background:#373939"></div>
<div style="left:1587.45px;top:836.05px;width:5.7px;height:5.7px;border-radius:50%;background:#373939"></div>
<svg style="left:0;top:0" width="2746" height="1284"><line x1="1207.20" y1="1149.10" x2="1599.80" y2="1149.10" stroke="#e4e4e4" stroke-width="1.4"/><line x1="1207.20" y1="1075.40" x2="1599.80" y2="1075.40" stroke="#e4e4e4" stroke-width="1.4"/><line x1="1207.20" y1="1001.70" x2="1599.80" y2="1001.70" stroke="#e4e4e4" stroke-width="1.4"/><line x1="1207.20" y1="928.00" x2="1599.80" y2="928.00" stroke="#e4e4e4" stroke-width="1.4"/><line x1="1207.20" y1="928.00" x2="1207.20" y2="1222.80" stroke="#e4e4e4" stroke-width="1.4"/><line x1="1239.92" y1="928.00" x2="1239.92" y2="1222.80" stroke="#e4e4e4" stroke-width="1.4"/><line x1="1272.63" y1="928.00" x2="1272.63" y2="1222.80" stroke="#e4e4e4" stroke-width="1.4"/><line x1="1305.35" y1="928.00" x2="1305.35" y2="1222.80" stroke="#e4e4e4" stroke-width="1.4"/><line x1="1338.07" y1="928.00" x2="1338.07" y2="1222.80" stroke="#e4e4e4" stroke-width="1.4"/><line x1="1370.78" y1="928.00" x2="1370.78" y2="1222.80" stroke="#e4e4e4" stroke-width="1.4"/><line x1="1403.50" y1="928.00" x2="1403.50" y2="1222.80" stroke="#e4e4e4" stroke-width="1.4"/><line x1="1436.22" y1="928.00" x2="1436.22" y2="1222.80" stroke="#e4e4e4" stroke-width="1.4"/><line x1="1468.93" y1="928.00" x2="1468.93" y2="1222.80" stroke="#e4e4e4" stroke-width="1.4"/><line x1="1501.65" y1="928.00" x2="1501.65" y2="1222.80" stroke="#e4e4e4" stroke-width="1.4"/><line x1="1534.37" y1="928.00" x2="1534.37" y2="1222.80" stroke="#e4e4e4" stroke-width="1.4"/><line x1="1567.08" y1="928.00" x2="1567.08" y2="1222.80" stroke="#e4e4e4" stroke-width="1.4"/><line x1="1599.80" y1="928.00" x2="1599.80" y2="1222.80" stroke="#e4e4e4" stroke-width="1.4"/><path d="M1223.56 983.42 C1234.46 987.23 1245.37 991.04 1256.28 994.04 C1267.18 997.03 1278.09 996.49 1288.99 1001.41 C1299.90 1006.32 1310.80 1042.09 1321.71 1043.27 C1332.61 1044.45 1343.52 1045.04 1354.42 1045.04 C1365.33 1045.04 1376.24 1045.04 1387.14 1045.04 C1398.05 1045.04 1408.95 1049.95 1419.86 1053.00 C1430.76 1056.04 1441.67 1063.31 1452.58 1063.31 C1463.48 1063.31 1474.39 1062.38 1485.29 1061.84 C1496.20 1061.30 1507.10 1060.76 1518.01 1060.07 C1528.91 1059.38 1539.82 1057.71 1550.72 1057.71 C1561.63 1057.71 1572.54 1059.63 1583.44 1061.54 L1583.44 1222.80 L1223.56 1222.80 Z" fill="#5877a0" fill-opacity="0.73"/><path d="M1223.56 983.42 C1234.46 987.23 1245.37 991.04 1256.28 994.04 C1267.18 997.03 1278.09 996.49 1288.99 1001.41 C1299.90 1006.32 1310.80 1042.09 1321.71 1043.27 C1332.61 1044.45 1343.52 1045.04 1354.42 1045.04 C1365.33 1045.04 1376.24 1045.04 1387.14 1045.04 C1398.05 1045.04 1408.95 1049.95 1419.86 1053.00 C1430.76 1056.04 1441.67 1063.31 1452.58 1063.31 C1463.48 1063.31 1474.39 1062.38 1485.29 1061.84 C1496.20 1061.30 1507.10 1060.76 1518.01 1060.07 C1528.91 1059.38 1539.82 1057.71 1550.72 1057.71 C1561.63 1057.71 1572.54 1059.63 1583.44 1061.54" fill="none" stroke="#5877a0" stroke-width="3" stroke-linejoin="round"/><path d="M1223.56 1001.41 C1234.46 1002.31 1245.37 1003.22 1256.28 1004.65 C1267.18 1006.07 1278.09 1006.96 1288.99 1009.95 C1299.90 1012.95 1310.80 1018.11 1321.71 1022.63 C1332.61 1027.15 1343.52 1033.49 1354.42 1037.08 C1365.33 1040.66 1376.24 1044.15 1387.14 1044.15 C1398.05 1044.15 1408.95 1041.20 1419.86 1041.20 C1430.76 1041.20 1441.67 1041.60 1452.58 1042.38 C1463.48 1043.17 1474.39 1048.28 1485.29 1048.28 C1496.20 1048.28 1507.10 1041.50 1518.01 1039.73 C1528.91 1037.96 1539.82 1037.08 1550.72 1037.08 C1561.63 1037.08 1572.54 1037.08 1583.44 1037.08 L1583.44 1222.80 L1223.56 1222.80 Z" fill="#da9149" fill-opacity="0.73"/><path d="M1223.56 1001.41 C1234.46 1002.31 1245.37 1003.22 1256.28 1004.65 C1267.18 1006.07 1278.09 1006.96 1288.99 1009.95 C1299.90 1012.95 1310.80 1018.11 1321.71 1022.63 C1332.61 1027.15 1343.52 1033.49 1354.42 1037.08 C1365.33 1040.66 1376.24 1044.15 1387.14 1044.15 C1398.05 1044.15 1408.95 1041.20 1419.86 1041.20 C1430.76 1041.20 1441.67 1041.60 1452.58 1042.38 C1463.48 1043.17 1474.39 1048.28 1485.29 1048.28 C1496.20 1048.28 1507.10 1041.50 1518.01 1039.73 C1528.91 1037.96 1539.82 1037.08 1550.72 1037.08 C1561.63 1037.08 1572.54 1037.08 1583.44 1037.08" fill="none" stroke="#da9149" stroke-width="3" stroke-linejoin="round"/><line x1="1207.20" y1="1223.60" x2="1599.80" y2="1223.60" stroke="#c9d5e9" stroke-width="1.6"/></svg>
<div class="t" style="left:1173.75px;top:1218.03px;font-size:17.3px;font-weight:normal;color:#555;letter-spacing:0.000px;">0</div>
<div class="t" style="left:1164.75px;top:1144.33px;font-size:17.3px;font-weight:normal;color:#555;letter-spacing:0.000px;transform:scaleX(0.9600);transform-origin:0 0;">25</div>
<div class="t" style="left:1164.75px;top:1070.63px;font-size:17.3px;font-weight:normal;color:#555;letter-spacing:0.000px;transform:scaleX(0.9600);transform-origin:0 0;">50</div>
<div class="t" style="left:1164.75px;top:996.93px;font-size:17.3px;font-weight:normal;color:#555;letter-spacing:0.000px;transform:scaleX(0.9600);transform-origin:0 0;">75</div>
<div class="t" style="left:1155.63px;top:923.23px;font-size:17.3px;font-weight:normal;color:#555;letter-spacing:0.000px;transform:scaleX(0.9600);transform-origin:0 0;">100</div>
<div class="t" style="left:1218.56px;top:1239.48px;font-size:17px;font-weight:normal;color:#555;letter-spacing:0.000px;">1</div>
<div class="t" style="left:1251.65px;top:1239.48px;font-size:17px;font-weight:normal;color:#555;letter-spacing:0.000px;">2</div>
<div class="t" style="left:1284.24px;top:1239.48px;font-size:17px;font-weight:normal;color:#555;letter-spacing:0.000px;">3</div>
<div class="t" style="left:1317.08px;top:1239.48px;font-size:17px;font-weight:normal;color:#555;letter-spacing:0.000px;">4</div>
<div class="t" style="left:1349.67px;top:1239.48px;font-size:17px;font-weight:normal;color:#555;letter-spacing:0.000px;">5</div>
<div class="t" style="left:1382.39px;top:1239.48px;font-size:17px;font-weight:normal;color:#555;letter-spacing:0.000px;">6</div>
<div class="t" style="left:1415.23px;top:1239.48px;font-size:17px;font-weight:normal;color:#555;letter-spacing:0.000px;">7</div>
<div class="t" style="left:1447.83px;top:1239.48px;font-size:17px;font-weight:normal;color:#555;letter-spacing:0.000px;">8</div>
<div class="t" style="left:1480.54px;top:1239.48px;font-size:17px;font-weight:normal;color:#555;letter-spacing:0.000px;">9</div>
<div class="t" style="left:1508.26px;top:1239.48px;font-size:17px;font-weight:normal;color:#555;letter-spacing:0.000px;">10</div>
<div class="t" style="left:1541.60px;top:1239.48px;font-size:17px;font-weight:normal;color:#555;letter-spacing:0.000px;">11</div>
<div class="t" style="left:1573.82px;top:1239.48px;font-size:17px;font-weight:normal;color:#555;letter-spacing:0.000px;">12</div>
<div style="left:1650.9px;top:788px;width:512.7px;height:520px;background:#fff;border-radius:8px;box-shadow:0 1px 2px rgba(0,0,0,0.12),0 3px 12px rgba(0,0,0,0.07)"></div>
<div style="left:1650.9px;top:877px;width:512.7px;height:1px;background:#e6e7eb"></div>
<div class="t" style="left:1675.52px;top:817.56px;font-size:30px;font-weight:normal;color:#373939;letter-spacing:0.000px;transform:scaleX(0.9227);transform-origin:0 0;">Sales Orders</div>
<div style="left:1980.00px;top:819.90px;width:6.3px;height:6.3px;border-radius:1.6px;background:#373939"></div>
<div style="left:1980.00px;top:827.75px;width:6.3px;height:6.3px;border-radius:1.6px;background:#373939"></div>
<div style="left:1980.00px;top:835.60px;width:6.3px;height:6.3px;border-radius:1.6px;background:#373939"></div>
<div style="left:1988.35px;top:819.90px;width:6.3px;height:6.3px;border-radius:1.6px;background:#373939"></div>
<div style="left:1988.35px;top:827.75px;width:6.3px;height:6.3px;border-radius:1.6px;background:#373939"></div>
<div style="left:1988.35px;top:835.60px;width:6.3px;height:6.3px;border-radius:1.6px;background:#373939"></div>
<div style="left:1996.70px;top:819.90px;width:6.3px;height:6.3px;border-radius:1.6px;background:#373939"></div>
<div style="left:1996.70px;top:827.75px;width:6.3px;height:6.3px;border-radius:1.6px;background:#373939"></div>
<div style="left:1996.70px;top:835.60px;width:6.3px;height:6.3px;border-radius:1.6px;background:#373939"></div>
<svg style="left:2041.95px;top:817.55px" width="26.90" height="26.90" viewBox="-13.45 -13.45 26.90 26.90"><circle cx="0" cy="0" r="12.45" fill="#373939"/><circle cx="0" cy="-4.6" r="1.85" fill="#fff"/><path d="M-2.9 -0.9 H1.7 V4.9 H3.3 V6.5 H-3.5 V4.9 H-1.7 V1.1 H-2.9 Z" fill="#fff"/></svg>
<div style="left:2116.55px;top:820.15px;width:5.7px;height:5.7px;border-radius:50%;background:#373939"></div>
<div style="left:2116.55px;top:828.25px;width:5.7px;height:5.7px;border-radius:50%;background:#373939"></div>
<div style="left:2116.55px;top:836.05px;width:5.7px;height:5.7px;border-radius:50%;background:#373939"></div>
<svg style="left:0;top:0" width="2746" height="1284"><line x1="1737.70" y1="1124.53" x2="2130.30" y2="1124.53" stroke="#e4e4e4" stroke-width="1.4"/><line x1="1737.70" y1="1026.27" x2="2130.30" y2="1026.27" stroke="#e4e4e4" stroke-width="1.4"/><line x1="1737.70" y1="928.00" x2="2130.30" y2="928.00" stroke="#e4e4e4" stroke-width="1.4"/><line x1="1737.70" y1="928.00" x2="1737.70" y2="1222.80" stroke="#e4e4e4" stroke-width="1.4"/><line x1="1770.42" y1="928.00" x2="1770.42" y2="1222.80" stroke="#e4e4e4" stroke-width="1.4"/><line x1="1803.13" y1="928.00" x2="1803.13" y2="1222.80" stroke="#e4e4e4" stroke-width="1.4"/><line x1="1835.85" y1="928.00" x2="1835.85" y2="1222.80" stroke="#e4e4e4" stroke-width="1.4"/><line x1="1868.57" y1="928.00" x2="1868.57" y2="1222.80" stroke="#e4e4e4" stroke-width="1.4"/><line x1="1901.28" y1="928.00" x2="1901.28" y2="1222.80" stroke="#e4e4e4" stroke-width="1.4"/><line x1="1934.00" y1="928.00" x2="1934.00" y2="1222.80" stroke="#e4e4e4" stroke-width="1.4"/><line x1="1966.72" y1="928.00" x2="1966.72" y2="1222.80" stroke="#e4e4e4" stroke-width="1.4"/><line x1="1999.43" y1="928.00" x2="1999.43" y2="1222.80" stroke="#e4e4e4" stroke-width="1.4"/><line x1="2032.15" y1="928.00" x2="2032.15" y2="1222.80" stroke="#e4e4e4" stroke-width="1.4"/><line x1="2064.87" y1="928.00" x2="2064.87" y2="1222.80" stroke="#e4e4e4" stroke-width="1.4"/><line x1="2097.58" y1="928.00" x2="2097.58" y2="1222.80" stroke="#e4e4e4" stroke-width="1.4"/><line x1="2130.30" y1="928.00" x2="2130.30" y2="1222.80" stroke="#e4e4e4" stroke-width="1.4"/><path d="M1754.06 1207.47 C1764.96 1201.33 1775.87 1195.19 1786.78 1190.57 C1797.68 1185.95 1808.59 1184.12 1819.49 1179.76 C1830.40 1175.40 1841.30 1170.42 1852.21 1164.43 C1863.11 1158.44 1874.02 1150.15 1884.93 1143.79 C1895.83 1137.44 1906.74 1132.92 1917.64 1126.30 C1928.55 1119.69 1939.45 1112.32 1950.36 1104.09 C1961.26 1095.87 1972.17 1083.26 1983.08 1076.97 C1993.98 1070.68 2004.89 1069.31 2015.79 1066.36 C2026.70 1063.41 2037.60 1063.74 2048.51 1059.28 C2059.41 1054.83 2070.32 1045.85 2081.23 1039.63 C2092.13 1033.41 2103.04 1027.68 2113.94 1021.94 L2113.94 1222.80 L1754.06 1222.80 Z" fill="#5877a0" fill-opacity="0.73"/><path d="M1754.06 1207.47 C1764.96 1201.33 1775.87 1195.19 1786.78 1190.57 C1797.68 1185.95 1808.59 1184.12 1819.49 1179.76 C1830.40 1175.40 1841.30 1170.42 1852.21 1164.43 C1863.11 1158.44 1874.02 1150.15 1884.93 1143.79 C1895.83 1137.44 1906.74 1132.92 1917.64 1126.30 C1928.55 1119.69 1939.45 1112.32 1950.36 1104.09 C1961.26 1095.87 1972.17 1083.26 1983.08 1076.97 C1993.98 1070.68 2004.89 1069.31 2015.79 1066.36 C2026.70 1063.41 2037.60 1063.74 2048.51 1059.28 C2059.41 1054.83 2070.32 1045.85 2081.23 1039.63 C2092.13 1033.41 2103.04 1027.68 2113.94 1021.94" fill="none" stroke="#5877a0" stroke-width="3" stroke-linejoin="round"/><path d="M1754.06 1210.61 C1764.96 1202.43 1775.87 1194.24 1786.78 1188.41 C1797.68 1182.58 1808.59 1180.15 1819.49 1175.63 C1830.40 1171.11 1841.30 1167.12 1852.21 1161.29 C1863.11 1155.45 1874.02 1147.56 1884.93 1140.65 C1895.83 1133.74 1906.74 1126.47 1917.64 1119.82 C1928.55 1113.17 1939.45 1106.85 1950.36 1100.75 C1961.26 1094.66 1972.17 1088.67 1983.08 1083.26 C1993.98 1077.86 2004.89 1073.89 2015.79 1068.32 C2026.70 1062.76 2037.60 1054.53 2048.51 1049.85 C2059.41 1045.17 2070.32 1042.45 2081.23 1040.22 C2092.13 1037.99 2103.04 1037.24 2113.94 1036.49 L2113.94 1222.80 L1754.06 1222.80 Z" fill="#da9149" fill-opacity="0.73"/><path d="M1754.06 1210.61 C1764.96 1202.43 1775.87 1194.24 1786.78 1188.41 C1797.68 1182.58 1808.59 1180.15 1819.49 1175.63 C1830.40 1171.11 1841.30 1167.12 1852.21 1161.29 C1863.11 1155.45 1874.02 1147.56 1884.93 1140.65 C1895.83 1133.74 1906.74 1126.47 1917.64 1119.82 C1928.55 1113.17 1939.45 1106.85 1950.36 1100.75 C1961.26 1094.66 1972.17 1088.67 1983.08 1083.26 C1993.98 1077.86 2004.89 1073.89 2015.79 1068.32 C2026.70 1062.76 2037.60 1054.53 2048.51 1049.85 C2059.41 1045.17 2070.32 1042.45 2081.23 1040.22 C2092.13 1037.99 2103.04 1037.24 2113.94 1036.49" fill="none" stroke="#da9149" stroke-width="3" stroke-linejoin="round"/><line x1="1737.70" y1="1223.60" x2="2130.30" y2="1223.60" stroke="#c9d5e9" stroke-width="1.6"/></svg>
<div class="t" style="left:1704.85px;top:1218.03px;font-size:17.3px;font-weight:normal;color:#555;letter-spacing:0.000px;">0</div>
<div class="t" style="left:1695.85px;top:1119.76px;font-size:17.3px;font-weight:normal;color:#555;letter-spacing:0.000px;transform:scaleX(0.9600);transform-origin:0 0;">50</div>
<div class="t" style="left:1686.73px;top:1021.50px;font-size:17.3px;font-weight:normal;color:#555;letter-spacing:0.000px;transform:scaleX(0.9600);transform-origin:0 0;">100</div>
<div class="t" style="left:1686.73px;top:923.23px;font-size:17.3px;font-weight:normal;color:#555;letter-spacing:0.000px;transform:scaleX(0.9600);transform-origin:0 0;">150</div>
<div class="t" style="left:1749.06px;top:1239.48px;font-size:17px;font-weight:normal;color:#555;letter-spacing:0.000px;">1</div>
<div class="t" style="left:1782.15px;top:1239.48px;font-size:17px;font-weight:normal;color:#555;letter-spacing:0.000px;">2</div>
<div class="t" style="left:1814.74px;top:1239.48px;font-size:17px;font-weight:normal;color:#555;letter-spacing:0.000px;">3</div>
<div class="t" style="left:1847.58px;top:1239.48px;font-size:17px;font-weight:normal;color:#555;letter-spacing:0.000px;">4</div>
<div class="t" style="left:1880.18px;top:1239.48px;font-size:17px;font-weight:normal;color:#555;letter-spacing:0.000px;">5</div>
<div class="t" style="left:1912.89px;top:1239.48px;font-size:17px;font-weight:normal;color:#555;letter-spacing:0.000px;">6</div>
<div class="t" style="left:1945.73px;top:1239.48px;font-size:17px;font-weight:normal;color:#555;letter-spacing:0.000px;">7</div>
<div class="t" style="left:1978.33px;top:1239.48px;font-size:17px;font-weight:normal;color:#555;letter-spacing:0.000px;">8</div>
<div class="t" style="left:2011.04px;top:1239.48px;font-size:17px;font-weight:normal;color:#555;letter-spacing:0.000px;">9</div>
<div class="t" style="left:2038.76px;top:1239.48px;font-size:17px;font-weight:normal;color:#555;letter-spacing:0.000px;">10</div>
<div class="t" style="left:2072.10px;top:1239.48px;font-size:17px;font-weight:normal;color:#555;letter-spacing:0.000px;">11</div>
<div class="t" style="left:2104.32px;top:1239.48px;font-size:17px;font-weight:normal;color:#555;letter-spacing:0.000px;">12</div>
<div style="left:2179.3px;top:788px;width:512.7px;height:520px;background:#fff;border-radius:8px;box-shadow:0 1px 2px rgba(0,0,0,0.12),0 3px 12px rgba(0,0,0,0.07)"></div>
<div style="left:2179.3px;top:877px;width:512.7px;height:1px;background:#e6e7eb"></div>
<div class="t" style="left:2205.30px;top:817.56px;font-size:30px;font-weight:normal;color:#373939;letter-spacing:0.000px;transform:scaleX(0.9227);transform-origin:0 0;">Avg. Revenue p...</div>
<div style="left:2508.40px;top:819.90px;width:6.3px;height:6.3px;border-radius:1.6px;background:#373939"></div>
<div style="left:2508.40px;top:827.75px;width:6.3px;height:6.3px;border-radius:1.6px;background:#373939"></div>
<div style="left:2508.40px;top:835.60px;width:6.3px;height:6.3px;border-radius:1.6px;background:#373939"></div>
<div style="left:2516.75px;top:819.90px;width:6.3px;height:6.3px;border-radius:1.6px;background:#373939"></div>
<div style="left:2516.75px;top:827.75px;width:6.3px;height:6.3px;border-radius:1.6px;background:#373939"></div>
<div style="left:2516.75px;top:835.60px;width:6.3px;height:6.3px;border-radius:1.6px;background:#373939"></div>
<div style="left:2525.10px;top:819.90px;width:6.3px;height:6.3px;border-radius:1.6px;background:#373939"></div>
<div style="left:2525.10px;top:827.75px;width:6.3px;height:6.3px;border-radius:1.6px;background:#373939"></div>
<div style="left:2525.10px;top:835.60px;width:6.3px;height:6.3px;border-radius:1.6px;background:#373939"></div>
<svg style="left:2570.35px;top:817.55px" width="26.90" height="26.90" viewBox="-13.45 -13.45 26.90 26.90"><circle cx="0" cy="0" r="12.45" fill="#373939"/><circle cx="0" cy="-4.6" r="1.85" fill="#fff"/><path d="M-2.9 -0.9 H1.7 V4.9 H3.3 V6.5 H-3.5 V4.9 H-1.7 V1.1 H-2.9 Z" fill="#fff"/></svg>
<div style="left:2644.95px;top:820.15px;width:5.7px;height:5.7px;border-radius:50%;background:#373939"></div>
<div style="left:2644.95px;top:828.25px;width:5.7px;height:5.7px;border-radius:50%;background:#373939"></div>
<div style="left:2644.95px;top:836.05px;width:5.7px;height:5.7px;border-radius:50%;background:#373939"></div>
<svg style="left:0;top:0" width="2746" height="1284"><line x1="2264.90" y1="1124.53" x2="2657.90" y2="1124.53" stroke="#e4e4e4" stroke-width="1.4"/><line x1="2264.90" y1="1026.27" x2="2657.90" y2="1026.27" stroke="#e4e4e4" stroke-width="1.4"/><line x1="2264.90" y1="928.00" x2="2657.90" y2="928.00" stroke="#e4e4e4" stroke-width="1.4"/><line x1="2264.90" y1="928.00" x2="2264.90" y2="1222.80" stroke="#e4e4e4" stroke-width="1.4"/><line x1="2297.65" y1="928.00" x2="2297.65" y2="1222.80" stroke="#e4e4e4" stroke-width="1.4"/><line x1="2330.40" y1="928.00" x2="2330.40" y2="1222.80" stroke="#e4e4e4" stroke-width="1.4"/><line x1="2363.15" y1="928.00" x2="2363.15" y2="1222.80" stroke="#e4e4e4" stroke-width="1.4"/><line x1="2395.90" y1="928.00" x2="2395.90" y2="1222.80" stroke="#e4e4e4" stroke-width="1.4"/><line x1="2428.65" y1="928.00" x2="2428.65" y2="1222.80" stroke="#e4e4e4" stroke-width="1.4"/><line x1="2461.40" y1="928.00" x2="2461.40" y2="1222.80" stroke="#e4e4e4" stroke-width="1.4"/><line x1="2494.15" y1="928.00" x2="2494.15" y2="1222.80" stroke="#e4e4e4" stroke-width="1.4"/><line x1="2526.90" y1="928.00" x2="2526.90" y2="1222.80" stroke="#e4e4e4" stroke-width="1.4"/><line x1="2559.65" y1="928.00" x2="2559.65" y2="1222.80" stroke="#e4e4e4" stroke-width="1.4"/><line x1="2592.40" y1="928.00" x2="2592.40" y2="1222.80" stroke="#e4e4e4" stroke-width="1.4"/><line x1="2625.15" y1="928.00" x2="2625.15" y2="1222.80" stroke="#e4e4e4" stroke-width="1.4"/><line x1="2657.90" y1="928.00" x2="2657.90" y2="1222.80" stroke="#e4e4e4" stroke-width="1.4"/><path d="M2281.28 1082.28 C2292.19 1079.09 2303.11 1075.89 2314.03 1075.89 C2324.94 1075.89 2335.86 1095.38 2346.78 1096.04 C2357.69 1096.69 2368.61 1096.36 2379.53 1097.02 C2390.44 1097.67 2401.36 1114.79 2412.28 1120.11 C2423.19 1125.43 2434.11 1128.96 2445.03 1128.96 C2455.94 1128.96 2466.86 1126.58 2477.78 1123.55 C2488.69 1120.52 2499.61 1110.78 2510.53 1110.78 C2521.44 1110.78 2532.36 1113.81 2543.28 1114.71 C2554.19 1115.61 2565.11 1115.28 2576.03 1116.18 C2586.94 1117.08 2597.86 1119.78 2608.78 1120.11 C2619.69 1120.44 2630.61 1120.52 2641.53 1120.60 L2641.53 1222.80 L2281.28 1222.80 Z" fill="#5877a0" fill-opacity="0.73"/><path d="M2281.28 1082.28 C2292.19 1079.09 2303.11 1075.89 2314.03 1075.89 C2324.94 1075.89 2335.86 1095.38 2346.78 1096.04 C2357.69 1096.69 2368.61 1096.36 2379.53 1097.02 C2390.44 1097.67 2401.36 1114.79 2412.28 1120.11 C2423.19 1125.43 2434.11 1128.96 2445.03 1128.96 C2455.94 1128.96 2466.86 1126.58 2477.78 1123.55 C2488.69 1120.52 2499.61 1110.78 2510.53 1110.78 C2521.44 1110.78 2532.36 1113.81 2543.28 1114.71 C2554.19 1115.61 2565.11 1115.28 2576.03 1116.18 C2586.94 1117.08 2597.86 1119.78 2608.78 1120.11 C2619.69 1120.44 2630.61 1120.52 2641.53 1120.60" fill="none" stroke="#5877a0" stroke-width="3" stroke-linejoin="round"/><path d="M2281.28 1022.83 C2292.19 1078.10 2303.11 1133.38 2314.03 1133.38 C2324.94 1133.38 2335.86 1091.12 2346.78 1091.12 C2357.69 1091.12 2368.61 1091.12 2379.53 1091.12 C2390.44 1091.12 2401.36 1103.73 2412.28 1108.81 C2423.19 1113.89 2434.11 1118.64 2445.03 1121.59 C2455.94 1124.53 2466.86 1124.70 2477.78 1126.50 C2488.69 1128.30 2499.61 1130.67 2510.53 1132.39 C2521.44 1134.11 2532.36 1136.82 2543.28 1136.82 C2554.19 1136.82 2565.11 1135.83 2576.03 1135.83 C2586.94 1135.83 2597.86 1136.82 2608.78 1137.31 C2619.69 1137.80 2630.61 1138.29 2641.53 1138.78 L2641.53 1222.80 L2281.28 1222.80 Z" fill="#da9149" fill-opacity="0.73"/><path d="M2281.28 1022.83 C2292.19 1078.10 2303.11 1133.38 2314.03 1133.38 C2324.94 1133.38 2335.86 1091.12 2346.78 1091.12 C2357.69 1091.12 2368.61 1091.12 2379.53 1091.12 C2390.44 1091.12 2401.36 1103.73 2412.28 1108.81 C2423.19 1113.89 2434.11 1118.64 2445.03 1121.59 C2455.94 1124.53 2466.86 1124.70 2477.78 1126.50 C2488.69 1128.30 2499.61 1130.67 2510.53 1132.39 C2521.44 1134.11 2532.36 1136.82 2543.28 1136.82 C2554.19 1136.82 2565.11 1135.83 2576.03 1135.83 C2586.94 1135.83 2597.86 1136.82 2608.78 1137.31 C2619.69 1137.80 2630.61 1138.29 2641.53 1138.78" fill="none" stroke="#da9149" stroke-width="3" stroke-linejoin="round"/><line x1="2264.90" y1="1223.60" x2="2657.90" y2="1223.60" stroke="#c9d5e9" stroke-width="1.6"/></svg>
<div class="t" style="left:2232.05px;top:1218.03px;font-size:17.3px;font-weight:normal;color:#555;letter-spacing:0.000px;">0</div>
<div class="t" style="left:2211.77px;top:1119.76px;font-size:17.3px;font-weight:normal;color:#555;letter-spacing:0.000px;transform:scaleX(0.9600);transform-origin:0 0;">20K</div>
<div class="t" style="left:2211.77px;top:1021.50px;font-size:17.3px;font-weight:normal;color:#555;letter-spacing:0.000px;transform:scaleX(0.9600);transform-origin:0 0;">40K</div>
<div class="t" style="left:2211.77px;top:923.23px;font-size:17.3px;font-weight:normal;color:#555;letter-spacing:0.000px;transform:scaleX(0.9600);transform-origin:0 0;">60K</div>
<div class="t" style="left:2276.28px;top:1239.48px;font-size:17px;font-weight:normal;color:#555;letter-spacing:0.000px;">1</div>
<div class="t" style="left:2309.40px;top:1239.48px;font-size:17px;font-weight:normal;color:#555;letter-spacing:0.000px;">2</div>
<div class="t" style="left:2342.03px;top:1239.48px;font-size:17px;font-weight:normal;color:#555;letter-spacing:0.000px;">3</div>
<div class="t" style="left:2374.90px;top:1239.48px;font-size:17px;font-weight:normal;color:#555;letter-spacing:0.000px;">4</div>
<div class="t" style="left:2407.53px;top:1239.48px;font-size:17px;font-weight:normal;color:#555;letter-spacing:0.000px;">5</div>
<div class="t" style="left:2440.28px;top:1239.48px;font-size:17px;font-weight:normal;color:#555;letter-spacing:0.000px;">6</div>
<div class="t" style="left:2473.15px;top:1239.48px;font-size:17px;font-weight:normal;color:#555;letter-spacing:0.000px;">7</div>
<div class="t" style="left:2505.78px;top:1239.48px;font-size:17px;font-weight:normal;color:#555;letter-spacing:0.000px;">8</div>
<div class="t" style="left:2538.53px;top:1239.48px;font-size:17px;font-weight:normal;color:#555;letter-spacing:0.000px;">9</div>
<div class="t" style="left:2566.28px;top:1239.48px;font-size:17px;font-weight:normal;color:#555;letter-spacing:0.000px;">10</div>
<div class="t" style="left:2599.65px;top:1239.48px;font-size:17px;font-weight:normal;color:#555;letter-spacing:0.000px;">11</div>
<div class="t" style="left:2631.90px;top:1239.48px;font-size:17px;font-weight:normal;color:#555;letter-spacing:0.000px;">12</div>
<div style="left:2343px;top:247px;width:346px;height:152px;background:#fff;border-radius:10px;box-shadow:0 4px 18px rgba(0,0,0,0.22)"></div>
<div style="left:2388px;top:292px;width:256px;height:56px;background:#ecedef;border:1px solid #dedfe2;border-radius:5px"></div>
<div class="t" style="left:2447.74px;top:308.90px;font-size:21.7px;font-weight:bold;color:#373939;letter-spacing:0.000px;transform:scaleX(0.9532);transform-origin:0 0;">Screenshot</div>
<svg style="left:2622px;top:316px" width="12.5" height="6.6"><path d="M0 0 L12.5 0 L6.25 6.6 Z" fill="#333"/></svg>
<svg style="left:2600px;top:150px" width="110" height="130"><ellipse cx="54.5" cy="64" rx="40.5" ry="48.5" fill="none" stroke="#ea3b22" stroke-width="2.6"/></svg>
<div style="left:2734px;top:22px;width:2px;height:1262px;background:#e8e8e8"></div>
<div style="left:2736px;top:22px;width:10px;height:1262px;background:#fafafa"></div>
<div style="left:2742px;top:28px;width:12px;height:1043px;background:#c1c1c1;border-radius:6px"></div>
</div></body></html>
